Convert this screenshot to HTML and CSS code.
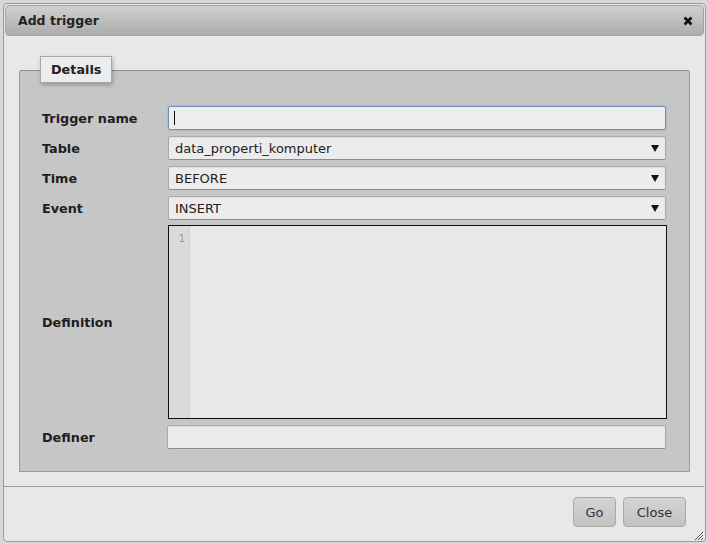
FILE: index.html
```html
<!DOCTYPE html>
<html>
<head>
<meta charset="utf-8">
<link rel="stylesheet" href="styles.css">
</head>
<body>
<div class="dialog">
  <div class="titlebar">
    <span class="title">Add trigger</span>
    <svg class="close-x" width="10" height="10" viewBox="0 0 10 10"><path d="M1.5 1.5 L8.5 8.5 M8.5 1.5 L1.5 8.5" stroke="#111" stroke-width="2.6" stroke-linecap="butt"/></svg>
  </div>
  <div class="content">
    <div class="fieldset">
      <div class="legend">Details</div>
      <div class="form">
        <label class="lbl">Trigger name</label>
        <div class="input focus"><span class="caret"></span></div>
        <label class="lbl">Table</label>
        <div class="input select"><span>data_properti_komputer</span><span class="arrow"></span></div>
        <label class="lbl">Time</label>
        <div class="input select"><span>BEFORE</span><span class="arrow"></span></div>
        <label class="lbl">Event</label>
        <div class="input select"><span>INSERT</span><span class="arrow"></span></div>
        <label class="lbl">Definition</label>
        <div class="editor">
          <div class="gutter"><span class="lineno">1</span></div>
          <div class="code"></div>
        </div>
        <label class="lbl">Definer</label>
        <div class="input definer"></div>
      </div>
    </div>
  </div>
  <div class="footer">
    <button class="btn go">Go</button>
    <button class="btn close">Close</button>
    <svg class="grip" width="12" height="12" viewBox="0 0 12 12"><path d="M11 3 L3 11 M11 6 L6 11 M11 9 L9 11" stroke="#555" stroke-width="1"/></svg>
  </div>
</div>
</body>
</html>
```
FILE: styles.css
```css
* { box-sizing: border-box; }
html, body { margin: 0; padding: 0; }
body {
  background: #d8d8d8;
  font-family: "DejaVu Sans", Verdana, sans-serif;
  font-size: 13px;
  color: #222;
  width: 707px;
  height: 544px;
  overflow: hidden;
}
.dialog {
  margin: 3px 1px 0 3px;
  height: 539px;
  border: 1px solid #9a9a9a;
  border-radius: 4px;
  background: #e8e8e8;
  display: flex;
  flex-direction: column;
  position: relative;
}
.titlebar {
  margin: 1px 1px 0 1px;
  height: 31px;
  border: 1px solid #a4a4a4;
  border-radius: 4px;
  background: linear-gradient(#d0d0d0, #acacac);
  display: flex;
  align-items: center;
  justify-content: space-between;
  padding: 0 10px 0 12px;
}
.title {
  font-weight: bold;
  font-size: 12.5px;
  color: #222;
}
.close-x { display: block; }
.content {
  padding: 34px 15px 0 15px;
}
.fieldset {
  border: 1px solid #9c9c9c;
  border-top-color: #8e8e8e;
  background: #c6c6c6;
  border-radius: 3px 3px 0 0;
  height: 402px;
  display: flex;
  flex-direction: column;
  align-items: flex-start;
}
.legend {
  margin: -15px 0 0 20px;
  height: 27px;
  padding: 0 10px;
  border: 1px solid #a8a8a8;
  background: #ececec;
  font-weight: bold;
  font-size: 12.8px;
  line-height: 25px;
  box-shadow: 1px 2px 4px rgba(0,0,0,0.25);
}
.form {
  align-self: stretch;
  margin-top: 23px;
  padding: 0 23px 0 22px;
  display: grid;
  grid-template-columns: 126px 1fr;
  row-gap: 6px;
  align-items: center;
}
.lbl {
  font-weight: bold;
  font-size: 12.8px;
  color: #1e1e1e;
}
.input {
  height: 24px;
  background: #ececec;
  border: 1px solid #a8a8a8;
  border-bottom-color: #8c8c8c;
  border-radius: 2px;
  display: flex;
  align-items: center;
  padding: 0 6px;
  box-shadow: inset 0 1px 1px rgba(0,0,0,0.06);
}
.input.focus {
  border: 1px solid #6f8fbd;
  background: #eeeeee;
  box-shadow: 0 0 2px rgba(90,130,200,0.5);
}
.caret {
  width: 1px;
  height: 14px;
  background: #111;
  margin-left: -1px;
}
.select { justify-content: space-between; padding-right: 6px; }
.arrow {
  width: 0; height: 0;
  border-left: 4px solid transparent;
  border-right: 4px solid transparent;
  border-top: 7px solid #111;
}
.editor {
  height: 194px;
  border: 1px solid #111;
  display: flex;
  background: #e8e8e8;
  margin: -1px -1px 0 0;
}
.gutter {
  width: 21px;
  background: #dadada;
  border-right: 1px solid #cfcfcf;
  text-align: right;
  padding: 4px 4px 0 0;
}
.lineno {
  font-size: 10px;
  color: #999;
}
.code { flex: 1; }
.definer { margin-left: -1px; }
.footer {
  margin-top: 14px;
  border-top: 1px solid #9e9e9e;
  display: flex;
  justify-content: flex-end;
  gap: 7px;
  padding: 10px 18px 0 0;
  flex: 1;
  margin-right: 1px;
  position: relative;
}
.btn {
  height: 30px;
  border: 1px solid #a9a9a9;
  border-radius: 4px;
  background: linear-gradient(#d4d4d4, #c2c2c2);
  font-family: "DejaVu Sans", Verdana, sans-serif;
  font-size: 13px;
  color: #333;
  padding: 0;
}
.go { width: 43px; }
.close { width: 63px; }
.grip {
  position: absolute;
  right: 0;
  bottom: 0;
}
```
